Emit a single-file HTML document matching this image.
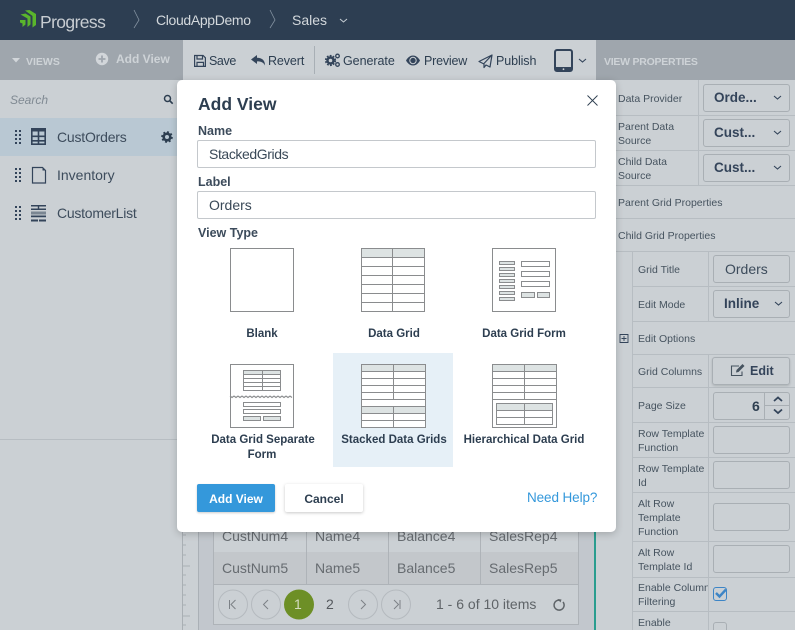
<!DOCTYPE html>
<html style="width:795px;height:630px;overflow:hidden"><head><meta charset="utf-8"><title>Add View</title>
<style>
html,body{margin:0;padding:0}
body{width:795px;height:630px;overflow:hidden}
#r{width:795px;height:630px;position:relative;overflow:hidden;background:#cbd0d4;font-family:"Liberation Sans",sans-serif;color:#3d4c5c}
.a{position:absolute}
.t{position:absolute;white-space:nowrap;line-height:16px}
.h{position:absolute;background:#b7bdc2;height:1px}
.v{position:absolute;background:#b7bdc2;width:1px}
.i{position:absolute;box-sizing:border-box;border:1px solid #a9afb4;border-radius:3px}
.l{font-size:10.5px;color:#46535f;line-height:14px}
.s{font-size:13.5px;font-weight:bold;color:#34445a}
.g{font-size:14px;color:#666b70}
.m{color:#2d3e50}
.b{font-weight:bold;font-size:11.5px;color:#2d3e50;text-align:center}
svg{position:absolute;overflow:visible}
.in{position:absolute;left:197px;width:399px;height:28px;box-sizing:border-box;border:1px solid #c4c8cc;border-radius:2px;background:#fff}
</style></head><body><div id="r">

<!-- header -->
<div class="a" style="left:0;top:0;width:795px;height:40px;background:#2d3e52"></div>
<svg style="left:0;top:0" width="350" height="40">
<path d="M25 10.500l4.500-.5 6.500 4v11l-3.500 2.500V16z" fill="#5ab52c"/>
<path d="M20.500 14.500l5-1 5 3v8l-3 2.500v-8.500z" fill="#5ab52c"/>
<path d="M20 20h5.500v4.500l-3 2.500v-3.500L20 22.500z" fill="#5ab52c"/>
<path d="M134 10l5 10-5 8M270 10l5 10-5 8" fill="none" stroke="#8492a1" stroke-width=".8"/>
<path d="M340 19l3.500 3 3.500-3" fill="none" stroke="#c6cdd4" stroke-width="1"/>
</svg>
<div class="t" style="left:40px;top:11px;font-size:17.5px;line-height:22px;letter-spacing:-.6px;color:#c8cdd2">Progress</div>
<div class="t" style="left:156px;top:12px;font-size:14px;letter-spacing:-.35px;color:#d3d8dc">CloudAppDemo</div>
<div class="t" style="left:292px;top:12px;font-size:14px;color:#d3d8dc">Sales</div>

<!-- toolbars -->
<div class="a" style="left:0;top:40px;width:183px;height:40px;background:#9fa6ad"></div>
<div class="a" style="left:596px;top:40px;width:199px;height:40px;background:#9fa6ad"></div>
<svg style="left:0;top:40px" width="183" height="40">
<path d="M12 18h8l-4 4.500z" fill="#d2d6da"/>
<circle cx="102" cy="19" r="6.200" fill="#d2d6da"/>
<path d="M102 15.500v7M98.500 19h7" stroke="#9fa6ad" stroke-width="1.800"/>
</svg>
<div class="t" style="left:26px;top:54px;font-size:10.5px;font-weight:bold;color:#ced3d7">VIEWS</div>
<div class="t" style="left:116px;top:51px;font-size:12px;font-weight:bold;color:#ced3d7">Add View</div>
<div class="t" style="left:604px;top:54px;font-size:10.5px;font-weight:bold;color:#ced3d7;letter-spacing:-.25px">VIEW PROPERTIES</div>

<svg style="left:183px;top:40px" width="413" height="40">
<g fill="none" stroke="#33445a" stroke-width="1.200">
<path d="M11.600 15.500h8.500l2.300 2.300v8.600h-10.800z"/><path d="M14 15.500v3.500h5.500v-3.500M14 26.400v-4h6.500v4"/>
</g>
<path d="M68 19.500l6-4.500v2.800c5 0 8 2.500 8 7.700-1.500-3-4-4.200-8-4.100v2.600z" fill="#33445a"/>
<rect x="131" y="6" width="1" height="28" fill="#a8afb5"/>
<g fill="none" stroke="#33445a">
<circle cx="147.500" cy="20.500" r="3" stroke-width="2.400"/>
<circle cx="147.500" cy="20.500" r="4.800" stroke-width="1.600" stroke-dasharray="1.800 1.300"/>
<circle cx="154.500" cy="16" r="1.800" stroke-width="1.300"/>
<circle cx="154.500" cy="24.500" r="1.800" stroke-width="1.300"/>
</g>
<path d="M223 20.500c2-3.500 4.500-5 7-5s5 1.500 7 5c-2 3.500-4.500 5-7 5s-5-1.500-7-5z" fill="#33445a"/>
<circle cx="230" cy="20.500" r="3.200" fill="#33445a" stroke="#cbd0d4"/>
<path d="M296 21.500l13-6.500-2 12-4-2-2 2.500v-3.500zM300.500 24l8-8.500" fill="none" stroke="#33445a" stroke-width="1.200" stroke-linejoin="round"/>
<rect x="372" y="10" width="17" height="21" rx="2" fill="none" stroke="#33445a" stroke-width="2"/>
<rect x="371.500" y="27" width="18" height="4.500" rx="1.500" fill="#33445a"/>
<circle cx="380.500" cy="29.200" r=".9" fill="#cbd0d4"/>
<path d="M396 19l3.500 3 3.500-3" fill="none" stroke="#33445a" stroke-width="1.100"/>
</svg>
<div class="t m" style="left:209px;top:53px;font-size:12.5px;letter-spacing:-.4px">Save</div>
<div class="t m" style="left:268px;top:53px;font-size:12.5px;letter-spacing:-.1px">Revert</div>
<div class="t m" style="left:343px;top:53px;font-size:12.5px;letter-spacing:-.05px">Generate</div>
<div class="t m" style="left:424px;top:53px;font-size:12.5px;letter-spacing:-.2px">Preview</div>
<div class="t m" style="left:496px;top:53px;font-size:12.5px;letter-spacing:-.1px">Publish</div>

<!-- left panel -->
<div class="a" style="left:0;top:118px;width:183px;height:38px;background:#b9c8d3"></div>
<div class="t" style="left:10px;top:92px;font-size:12px;font-style:italic;color:#808a93">Search</div>
<svg style="left:0;top:80px" width="183" height="150">
<circle cx="167.500" cy="18.500" r="3" fill="none" stroke="#2d3e50" stroke-width="1.500"/>
<path d="M170 21l2.700 2.700" stroke="#2d3e50" stroke-width="1.600"/>
<g fill="#33445a">
<path d="M15 50h2v2h-2zM19 50h2v2h-2zM15 54h2v2h-2zM19 54h2v2h-2zM15 58h2v2h-2zM19 58h2v2h-2zM15 62h2v2h-2zM19 62h2v2h-2z"/>
<path d="M15 50h2v2h-2zM19 50h2v2h-2zM15 54h2v2h-2zM19 54h2v2h-2zM15 58h2v2h-2zM19 58h2v2h-2zM15 62h2v2h-2zM19 62h2v2h-2z" transform="translate(0,38)"/>
<path d="M15 50h2v2h-2zM19 50h2v2h-2zM15 54h2v2h-2zM19 54h2v2h-2zM15 58h2v2h-2zM19 58h2v2h-2zM15 62h2v2h-2zM19 62h2v2h-2z" transform="translate(0,76)"/>
</g>
<!-- grid icon -->
<path d="M31.800 48.800h13.400v15.400h-13.400z" fill="none" stroke="#33445a" stroke-width="1.600"/>
<path d="M31 48h15v3.500H31zM31 55.500h15v1.600H31zM31 60h15v1.600H31zM37.700 51h1.600v13h-1.600z" fill="#33445a"/>
<!-- page icon -->
<path d="M32.500 87.500h10l3 3v12.500h-13z" fill="none" stroke="#33445a" stroke-width="1.200"/>
<path d="M42.500 87.500l3 3h-3z" fill="#33445a"/>
<!-- list icon -->
<path d="M31 125h15v1.500H31zM31 128.500h15v1.500H31zM37.800 125h1.400v5h-1.400z" fill="#33445a"/>
<path d="M31 131.500h15v3H31z" fill="#7a8692"/>
<path d="M31 135.500h15v1.800H31zM31 139.500h7v2H31zM39 139.500h7v2h-7z" fill="#33445a"/>
<!-- gear -->
<circle cx="167" cy="57" r="3.300" fill="none" stroke="#2d3e50" stroke-width="2.600"/>
<circle cx="167" cy="57" r="5" fill="none" stroke="#2d3e50" stroke-width="1.600" stroke-dasharray="2 1.900"/>
</svg>
<div class="t" style="left:57px;top:129px;font-size:14px;letter-spacing:-.2px">CustOrders</div>
<div class="t" style="left:57px;top:167px;font-size:14px;letter-spacing:0">Inventory</div>
<div class="t" style="left:57px;top:205px;font-size:14px;letter-spacing:-.25px">CustomerList</div>
<div class="h" style="left:0;top:439px;width:177px"></div>

<!-- canvas -->
<div class="a" style="left:198px;top:520px;width:397px;height:110px;background:#c2c7cd;border-left:1px solid #aab0b6;box-sizing:border-box"></div>
<div class="a" style="left:594px;top:520px;width:2px;height:110px;background:#2a9d8f"></div>
<svg style="left:180px;top:520px" width="20" height="110">
<path d="M2.500 0v110" stroke="#a9afb4"/>
<path d="M3 5h3M3 15h3M3 25h3M3 35h3M3 55h3M3 65h3M3 75h3M3 85h3M3 105h3" stroke="#a9afb4"/>
<path d="M3 46h7M3 96h7" stroke="#a9afb4"/>
</svg>
<div class="a" style="left:213px;top:520px;width:366px;height:105px;box-sizing:border-box;border:1px solid #aeb3b8;background:#cbd0d4"></div>
<div class="a" style="left:214px;top:552px;width:364px;height:32px;background:#c3c7cb"></div>
<div class="h" style="left:214px;top:584px;width:364px;background:#aeb3b8"></div>
<div class="v" style="left:306px;top:520px;height:64px;background:#aeb3b8"></div>
<div class="v" style="left:388px;top:520px;height:64px;background:#aeb3b8"></div>
<div class="v" style="left:480px;top:520px;height:64px;background:#aeb3b8"></div>
<div class="t g" style="left:222px;top:528px">CustNum4</div>
<div class="t g" style="left:315px;top:528px">Name4</div>
<div class="t g" style="left:397px;top:528px">Balance4</div>
<div class="t g" style="left:489px;top:528px">SalesRep4</div>
<div class="t g" style="left:222px;top:560px">CustNum5</div>
<div class="t g" style="left:315px;top:560px">Name5</div>
<div class="t g" style="left:397px;top:560px">Balance5</div>
<div class="t g" style="left:489px;top:560px">SalesRep5</div>
<svg style="left:213px;top:585px" width="366" height="40">
<g fill="none" stroke="#b5babf"><circle cx="20" cy="19.500" r="14.500"/><circle cx="53" cy="19.500" r="14.500"/><circle cx="150" cy="19.500" r="14.500"/><circle cx="183" cy="19.500" r="14.500"/></g>
<circle cx="86" cy="19.500" r="15" fill="#6d8f26"/>
<g fill="none" stroke="#7c8186"><path d="M16.500 15v9M22.500 15l-4.500 4.500 4.500 4.500M55 15l-4.500 4.500 4.500 4.500M148 15l4.500 4.500-4.500 4.500M181 15l4.500 4.500-4.500 4.500M187 15v9"/></g>
<path d="M348 15.500a5 5 0 1 0 2 1.500" fill="none" stroke="#5f6468" stroke-width="1.500"/>
<path d="M344.500 14l4 .5-1 3z" fill="#5f6468"/>
</svg>
<div class="t" style="left:294px;top:596px;font-size:14px;color:#d4dcc0">1</div>
<div class="t" style="left:326px;top:596px;font-size:14px;color:#55595e">2</div>
<div class="t" style="left:436px;top:596px;font-size:14px;color:#5f6468">1 - 6 of 10 items</div>

<!-- right panel -->
<div class="v" style="left:698px;top:80px;height:105px"></div>
<div class="h" style="left:596px;top:115px;width:199px"></div>
<div class="h" style="left:596px;top:150px;width:199px"></div>
<div class="h" style="left:596px;top:185px;width:199px"></div>
<div class="h" style="left:596px;top:218px;width:199px"></div>
<div class="h" style="left:596px;top:251px;width:199px"></div>
<div class="h" style="left:632px;top:286px;width:163px"></div>
<div class="h" style="left:632px;top:321px;width:163px"></div>
<div class="h" style="left:632px;top:354px;width:163px"></div>
<div class="h" style="left:632px;top:387px;width:163px"></div>
<div class="h" style="left:632px;top:422px;width:163px"></div>
<div class="h" style="left:632px;top:457px;width:163px"></div>
<div class="h" style="left:632px;top:492px;width:163px"></div>
<div class="h" style="left:632px;top:541px;width:163px"></div>
<div class="h" style="left:632px;top:577px;width:163px"></div>
<div class="h" style="left:632px;top:611px;width:163px"></div>
<div class="v" style="left:632px;top:251px;height:379px"></div>
<div class="v" style="left:708px;top:251px;height:70px"></div>
<div class="v" style="left:708px;top:354px;height:276px"></div>

<div class="t l" style="left:618px;top:92px">Data Provider</div>
<div class="t l" style="left:618px;top:120px">Parent Data<br>Source</div>
<div class="t l" style="left:618px;top:155px">Child Data<br>Source</div>
<div class="t l" style="left:618px;top:196px">Parent Grid Properties</div>
<div class="t l" style="left:618px;top:229px">Child Grid Properties</div>
<div class="t l" style="left:638px;top:263px">Grid Title</div>
<div class="t l" style="left:638px;top:298px">Edit Mode</div>
<div class="t l" style="left:638px;top:332px">Edit Options</div>
<div class="t l" style="left:638px;top:365px">Grid Columns</div>
<div class="t l" style="left:638px;top:399px">Page Size</div>
<div class="t l" style="left:638px;top:427px">Row Template<br>Function</div>
<div class="t l" style="left:638px;top:462px">Row Template<br>Id</div>
<div class="t l" style="left:638px;top:497px">Alt Row<br>Template<br>Function</div>
<div class="t l" style="left:638px;top:546px">Alt Row<br>Template Id</div>
<div class="t l" style="left:638px;top:581px;width:70px;overflow:hidden">Enable Column<br>Filtering</div>
<div class="t l" style="left:638px;top:616px">Enable</div>

<div class="i" style="left:703px;top:84px;width:87px;height:28px"></div>
<div class="i" style="left:703px;top:119px;width:87px;height:28px"></div>
<div class="i" style="left:703px;top:154px;width:87px;height:28px"></div>
<div class="t s" style="left:714px;top:90px">Orde...</div>
<div class="t s" style="left:714px;top:125px">Cust...</div>
<div class="t s" style="left:714px;top:160px">Cust...</div>
<div class="i" style="left:713px;top:255px;width:77px;height:28px"></div>
<div class="t" style="left:725px;top:261px;font-size:14px;color:#3d4c5c">Orders</div>
<div class="i" style="left:713px;top:290px;width:77px;height:28px"></div>
<div class="t s" style="left:724px;top:296px">Inline</div>
<div class="i" style="left:712px;top:357px;width:78px;height:28px;box-shadow:0 1px 2px rgba(0,0,0,.15)"></div>
<div class="t" style="left:750px;top:363px;font-size:12.5px;font-weight:bold;color:#34445a">Edit</div>
<div class="i" style="left:713px;top:392px;width:77px;height:28px"></div>
<div class="v" style="left:764px;top:392px;height:28px;background:#a9afb4"></div>
<div class="h" style="left:764px;top:405px;width:26px;background:#a9afb4"></div>
<div class="t" style="left:752px;top:398px;font-size:14px;font-weight:bold;color:#2d3e50">6</div>
<div class="i" style="left:713px;top:426px;width:77px;height:28px"></div>
<div class="i" style="left:713px;top:461px;width:77px;height:28px"></div>
<div class="i" style="left:713px;top:503px;width:77px;height:28px"></div>
<div class="i" style="left:713px;top:545px;width:77px;height:28px"></div>
<div class="i" style="left:713px;top:587px;width:14px;height:14px;border-color:#3d85c6"></div>
<div class="i" style="left:713px;top:622px;width:14px;height:14px"></div>
<svg style="left:600px;top:80px" width="195" height="550">
<g fill="none" stroke="#33445a" stroke-width="1.100">
<path d="M174 16l3.500 3 3.500-3M174 51l3.500 3 3.500-3M174 86l3.500 3 3.500-3M175 222l3.500 3 3.500-3"/>
</g>
<g fill="none" stroke="#33445a" stroke-width="1.800">
<path d="M174 321l4-3.500 4 3.500M174 329.500l4 3.500 4-3.500"/>
</g>
<path d="M20 254.500h8v8h-8zM24 256v5M21.500 258.500h5" fill="none" stroke="#33445a" stroke-width=".9"/>
<path d="M139 286h-7.500v9.500H142v-4" fill="none" stroke="#46535f" stroke-width="1.100"/>
<path d="M136 292.500l.5-2.500 6-6 2 2-6 6z" fill="#46535f"/>
<path d="M116 513l3.500 3.500 6.500-7" fill="none" stroke="#3d85c6" stroke-width="2.400"/>
</svg>

<!-- modal -->
<div class="a" style="left:177px;top:80px;width:439px;height:452px;background:#fff;border-radius:5px;box-shadow:0 2px 8px rgba(0,0,0,.2)"></div>
<div class="t" style="left:198px;top:94px;font-size:17.5px;line-height:20px;font-weight:bold;color:#2d3e50">Add View</div>
<svg style="left:587px;top:95px" width="11" height="11"><path d="M.5.500l10 10M10.500.500l-10 10" stroke="#2d3e50" stroke-width=".9"/></svg>
<div class="t" style="left:198px;top:123px;font-size:12.5px;font-weight:bold;color:#3c4b5b">Name</div>
<div class="in" style="top:140px"></div>
<div class="t" style="left:209px;top:146px;font-size:14px;letter-spacing:-.4px;color:#3a4958">StackedGrids</div>
<div class="t" style="left:198px;top:174px;font-size:12.5px;font-weight:bold;color:#3c4b5b">Label</div>
<div class="in" style="top:191px"></div>
<div class="t" style="left:209px;top:197px;font-size:14px;color:#3a4958">Orders</div>
<div class="t" style="left:198px;top:225px;font-size:12.5px;font-weight:bold;color:#3c4b5b">View Type</div>

<div class="a" style="left:333px;top:353px;width:120px;height:114px;background:#e6f0f7"></div>

<svg style="left:0;top:0" width="795" height="630">
<g fill="#dde3e3">
<rect x="361" y="248" width="63" height="9"/>
<rect x="243" y="370" width="38" height="4"/>
<rect x="243" y="416" width="17" height="4"/><rect x="263" y="416" width="18" height="4"/>
<rect x="499" y="261" width="15" height="4"/><rect x="499" y="267" width="15" height="3"/><rect x="499" y="273" width="15" height="3"/><rect x="499" y="279" width="15" height="3"/><rect x="499" y="285" width="15" height="3"/><rect x="499" y="291" width="15" height="3"/><rect x="499" y="297" width="15" height="3"/>
<rect x="521" y="292" width="13" height="5"/><rect x="537" y="292" width="13" height="5"/>
<rect x="361" y="364" width="64" height="7"/><rect x="361" y="406" width="64" height="7"/>
<rect x="492" y="364" width="64" height="7"/><rect x="496" y="403" width="57" height="7"/>
</g>
<rect x="361" y="371" width="64" height="35" fill="#fff"/>
<rect x="361" y="413" width="64" height="14" fill="#fff"/>
<g fill="none" stroke="#8a8c8e" stroke-width="1">
<rect x="230.500" y="248.500" width="63" height="63"/>
<!-- data grid -->
<rect x="361.500" y="248.500" width="63" height="63"/>
<path d="M392.500 248v63M361 257.500h63M361 266.500h63M361 275.500h63M361 284.500h63M361 293.500h63M361 302.500h63"/>
<!-- form -->
<rect x="492.500" y="248.500" width="63" height="63"/>
<path d="M499.500 261.500h15v3h-15zM499.500 267.500h15v3h-15zM499.500 273.500h15v3h-15zM499.500 279.500h15v3h-15zM499.500 285.500h15v3h-15zM499.500 291.500h15v3h-15zM499.500 297.500h15v3h-15z"/>
<rect x="521.500" y="261.500" width="28" height="5"/><rect x="521.500" y="271.500" width="28" height="5"/><rect x="521.500" y="281.500" width="28" height="5"/>
<rect x="521.500" y="292.500" width="13" height="5"/><rect x="537.500" y="292.500" width="12" height="5"/>
<!-- separate -->
<rect x="230.500" y="364.500" width="63" height="63"/>
<rect x="243.500" y="370.500" width="37" height="20"/>
<path d="M262.500 370v20M243 374.500h37M243 378.500h37M243 382.500h37M243 386.500h37"/>
<rect x="243.500" y="402.500" width="37" height="4"/><rect x="243.500" y="409.500" width="37" height="4"/>
<rect x="243.500" y="416.500" width="17" height="4"/><rect x="263.500" y="416.500" width="17" height="4"/>
<path d="M230 396l2 1.500 2-1.500 2 1.500 2-1.500 2 1.500 2-1.500 2 1.500 2-1.500 2 1.500 2-1.500 2 1.500 2-1.500 2 1.500 2-1.500 2 1.500 2-1.500 2 1.500 2-1.500 2 1.500 2-1.500 2 1.500 2-1.500 2 1.500 2-1.500 2 1.500 2-1.500 2 1.500 2-1.500 2 1.500 2-1.500 2 1.500" stroke-width="1.100"/>
<!-- stacked -->
<rect x="361.500" y="364.500" width="64" height="63"/>
<path d="M393.500 364v35M393.500 406v21M361 371.500h64M361 378.500h64M361 385.500h64M361 392.500h64M361 399.500h64M361 406.500h64M361 413.500h64M361 420.500h64"/>
<!-- hierarchical -->
<rect x="492.500" y="364.500" width="64" height="63"/>
<path d="M524.500 364v35M492 371.500h64M492 378.500h64M492 385.500h64M492 392.500h64M492 399.500h64"/>
<rect x="496.500" y="403.500" width="56" height="21"/>
<path d="M524.500 403v21M496 410.500h56M496 417.500h56"/>
</g>
</svg>

<div class="t b" style="left:202px;top:326px;width:120px">Blank</div>
<div class="t b" style="left:334px;top:326px;width:120px">Data Grid</div>
<div class="t b" style="left:464px;top:326px;width:120px">Data Grid Form</div>
<div class="t b" style="left:193px;top:432px;width:140px">Data Grid Separate</div>
<div class="t b" style="left:192px;top:447px;width:140px">Form</div>
<div class="t b" style="left:324px;top:432px;width:140px">Stacked Data Grids</div>
<div class="t b" style="left:454px;top:432px;width:140px">Hierarchical Data Grid</div>

<div class="a" style="left:197px;top:484px;width:78px;height:28px;background:#3498db;border-radius:2px;box-shadow:0 1px 2px rgba(0,0,0,.2)"></div>
<div class="t" style="left:197px;top:491px;width:78px;text-align:center;font-size:12px;font-weight:bold;color:#fff">Add View</div>
<div class="a" style="left:285px;top:484px;width:78px;height:28px;background:#fff;border-radius:2px;box-shadow:0 1px 3px rgba(0,0,0,.22)"></div>
<div class="t" style="left:285px;top:491px;width:78px;text-align:center;font-size:12px;font-weight:bold;color:#2d3e50">Cancel</div>
<div class="t" style="left:527px;top:490px;font-size:13.5px;letter-spacing:-.1px;color:#3498db">Need Help?</div>

</div></body></html>
